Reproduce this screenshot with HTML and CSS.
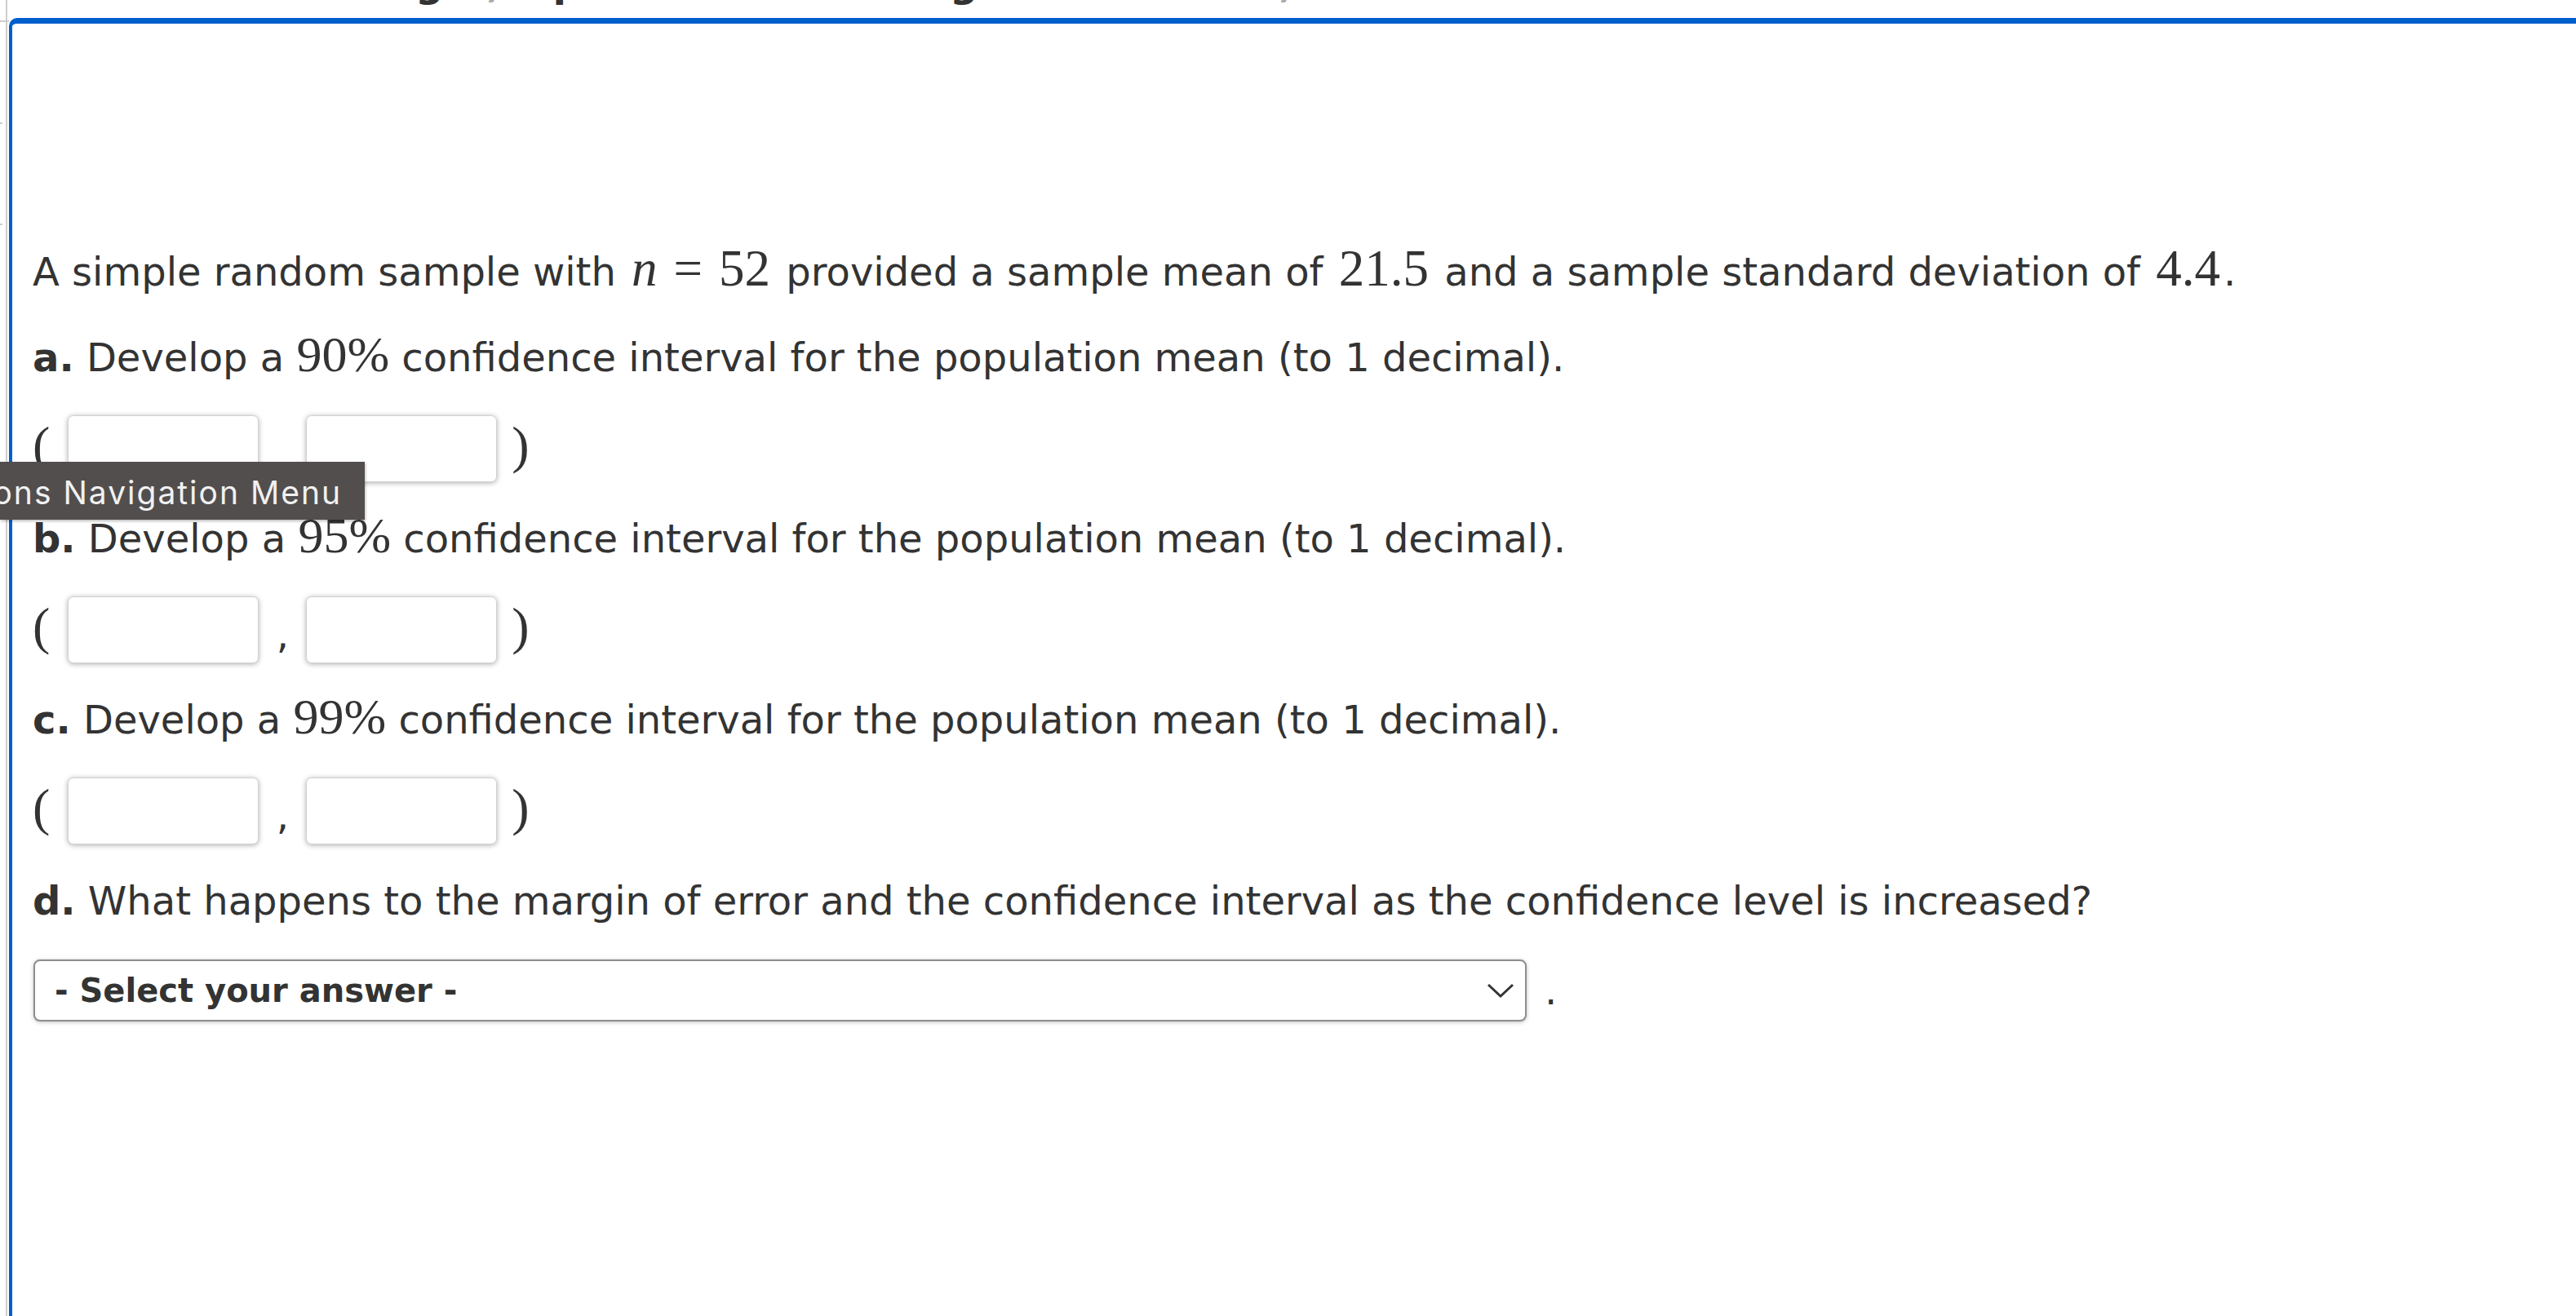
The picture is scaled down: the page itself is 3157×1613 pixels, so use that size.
FILE: index.html
```html
<!DOCTYPE html>
<html lang="en">
<head>
<meta charset="utf-8">
<title>Confidence interval question</title>
<link rel="stylesheet" href="styles.css">
</head>
<body>
<div class="page">
  <div class="rail">
    <span class="tick tick-top"></span>
    <span class="tick tick-a"></span>
    <span class="tick tick-b"></span>
  </div>
  <div class="main">
    <div class="frag-strip">
      <div class="frag-line"><span class="fr f1">g</span><span class="fr f2">,</span><span class="fr f3">p</span><span class="fr f4">g</span><span class="fr f5">,</span></div>
    </div>
    <div class="panel">
      <p class="q">A simple random sample with <span class="m spaced"><i>n</i><span class="rel">=</span>52</span> provided a sample mean of <span class="m spaced">21.5</span> and a sample standard deviation of <span class="m spaced">4.4</span>.</p>

      <p class="q part part-first"><b>a.</b> Develop a <span class="m">90%</span> confidence interval for the population mean (to 1 decimal).</p>
      <div class="ci"><span class="par open">(</span><input class="box" type="text"><span class="sep">,</span><input class="box" type="text"><span class="par close">)</span></div>

      <p class="q part"><b>b.</b> Develop a <span class="m">95%</span> confidence interval for the population mean (to 1 decimal).</p>
      <div class="ci"><span class="par open">(</span><input class="box" type="text"><span class="sep">,</span><input class="box" type="text"><span class="par close">)</span></div>

      <p class="q part"><b>c.</b> Develop a <span class="m">99%</span> confidence interval for the population mean (to 1 decimal).</p>
      <div class="ci"><span class="par open">(</span><input class="box" type="text"><span class="sep">,</span><input class="box" type="text"><span class="par close">)</span></div>

      <p class="q part"><b>d.</b> What happens to the margin of error and the confidence interval as the confidence level is increased?</p>
      <div class="answer">
        <div class="select"><span class="sel-text">- Select your answer -</span><svg class="chev" width="34" height="19" viewBox="0 0 34 19"><polyline points="2,2 17,16 32,2" fill="none" stroke="#333" stroke-width="3"/></svg></div>
        <span class="dot">.</span>
      </div>
    </div>
  </div>
</div>
<div class="tooltip"><span class="tip-text">Questions Navigation Menu</span></div>
</body>
</html>
```
FILE: styles.css
```css
html, body {
  margin: 0;
  padding: 0;
  background: #ffffff;
}
body {
  overflow: hidden;
  font-family: "DejaVu Sans", Verdana, sans-serif;
  color: #333333;
  position: relative;
  width: 3157px;
  height: 1613px;
}
.page {
  display: flex;
  height: 1613px;
  overflow: hidden;
}
.rail {
  width: 7px;
  flex-shrink: 0;
  border-right: 2px solid #cdcdcd;
  position: relative;
}
.tick {
  position: absolute;
  left: 0;
  height: 2px;
  background: #cdcdcd;
}
.tick-top { top: 25px; width: 11px; }
.tick-a { top: 150px; width: 3px; }
.tick-b { top: 274px; width: 3px; }

.main {
  flex: 1;
  min-width: 0;
  margin-left: 2px;
}
.frag-strip {
  height: 8px;
  overflow: hidden;
}
.frag-line {
  display: flex;
  margin-top: -45px;
  font-weight: bold;
  font-size: 48px;
  line-height: 48px;
  white-space: nowrap;
  color: #333333;
}
.f1 { margin-left: 498px; }
.f2 { margin-left: 53px; color: #aaaaaa; }
.f3 { margin-left: 63px; }
.f4 { margin-left: 452px; }
.f5 { margin-left: 369px; color: #aaaaaa; }

.panel {
  box-sizing: border-box;
  margin-top: 14px;
  margin-right: -60px;
  height: 1591px;
  border-top: 7px solid #005fcc;
  border-left: 4px solid #005fcc;
  border-top-left-radius: 10px;
  padding-top: 274px;
  padding-left: 25px;
}
.q {
  margin: 0;
  font-size: 48px;
  line-height: 60px;
  white-space: nowrap;
}
.part { margin-top: 39px; }
.part-first { margin-top: 45px; }
.m {
  font-family: "Liberation Serif", "Times New Roman", serif;
  font-size: 62px;
  line-height: 0;
}
.spaced {
  font-size: 63px;
  margin: 0 4px;
}
.rel { margin: 0 20px; }

.ci {
  display: flex;
  align-items: center;
  margin-top: 41px;
}
.box {
  width: 234px;
  height: 82px;
  box-sizing: border-box;
  margin: 0;
  padding: 0;
  border: 1px solid #d2d2d2;
  border-radius: 7px;
  background: #ffffff;
  box-shadow: 0 1px 6px rgba(0, 0, 0, 0.32);
  outline: none;
  font: inherit;
}
.par {
  font-family: "Liberation Serif", "Times New Roman", serif;
  font-size: 64px;
  line-height: 64px;
  margin-bottom: 8px;
}
.open { margin-right: 22px; }
.close { margin-left: 18px; }
.sep {
  width: 58px;
  text-align: center;
  align-self: flex-end;
  font-size: 48px;
  line-height: 48px;
  margin-bottom: 12px;
}

.answer {
  display: flex;
  align-items: center;
  margin-top: 42px;
}
.select {
  width: 1830px;
  height: 76px;
  margin-left: 1px;
  box-sizing: border-box;
  border: 2px solid #8d8d8d;
  border-radius: 8px;
  box-shadow: 0 1px 5px rgba(0, 0, 0, 0.25);
  background: #ffffff;
  display: flex;
  align-items: center;
  justify-content: space-between;
  padding: 0 13px 0 24px;
}
.sel-text {
  font-weight: bold;
  font-size: 40px;
  line-height: 48px;
  color: #333333;
}
.chev { display: block; }
.dot {
  margin-left: 22px;
  font-size: 48px;
  line-height: 48px;
}

.tooltip {
  position: absolute;
  left: 0;
  top: 566px;
  width: 447px;
  height: 71px;
  box-sizing: border-box;
  padding: 5px 28px 0 0;
  background: #524e4e;
  color: #f1f1f1;
  display: flex;
  justify-content: flex-end;
  align-items: center;
  overflow: hidden;
  white-space: nowrap;
  box-shadow: 1px 2px 3px rgba(0, 0, 0, 0.25);
}
.tip-text {
  font-family: Inter, "Open Sans", sans-serif;
  font-size: 39px;
  line-height: 48px;
  letter-spacing: 2px;
}
```
